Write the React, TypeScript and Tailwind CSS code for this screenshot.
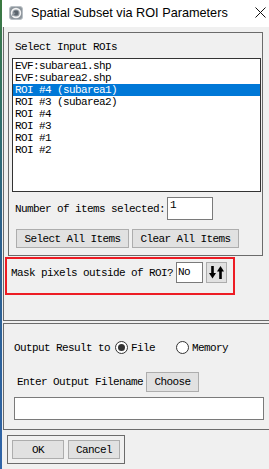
import type { ReactNode } from "react";

const mono =
  "font-['Liberation_Mono',monospace] text-[11px] leading-[12px] tracking-[-0.6px] text-black";

const items = [
  "EVF:subarea1.shp",
  "EVF:subarea2.shp",
  "ROI #4 (subarea1)",
  "ROI #3 (subarea2)",
  "ROI #4",
  "ROI #3",
  "ROI #1",
  "ROI #2",
];

function Btn({ children, className }: { children: ReactNode; className: string }) {
  return (
    <div
      className={`flex shrink-0 items-center justify-center border border-[#adadad] bg-[#e1e1e1] ${mono} ${className}`}
    >
      {children}
    </div>
  );
}

function Radio({ checked }: { checked: boolean }) {
  return (
    <svg width="13" height="13" viewBox="0 0 13 13" className="shrink-0">
      <circle cx="6.5" cy="6.5" r="6" fill="#fff" stroke="#333" strokeWidth="1" />
      {checked && <circle cx="6.5" cy="6.5" r="3.5" fill="#333" />}
    </svg>
  );
}

function TitleIcon() {
  return (
    <svg width="14" height="14" viewBox="0 0 14 14" className="shrink-0">
      <rect x="0.5" y="0.5" width="13" height="13" rx="2.5" fill="#8e969d" stroke="#b9bfc4" />
      <circle cx="7" cy="7" r="4.4" fill="none" stroke="#f4f4f4" strokeWidth="1.6" />
      <circle cx="7" cy="7" r="2.4" fill="#5b646c" />
      <path d="M3 9.5 L6 6.8" stroke="#8e969d" strokeWidth="1.4" />
    </svg>
  );
}

function SwapIcon() {
  return (
    <svg width="15" height="13" viewBox="0 0 15 13">
      <rect x="2.2" y="0" width="2.6" height="8" fill="#000" />
      <polygon points="0,7 7,7 3.5,12.5" fill="#000" />
      <rect x="10.2" y="4.5" width="2.6" height="8.5" fill="#000" />
      <polygon points="8,5.5 15,5.5 11.5,0" fill="#000" />
    </svg>
  );
}

export default function App() {
  return (
    <div className="flex h-[469px] w-[269px] overflow-hidden bg-[#f0f0f0]">
      <div className="w-[2px] shrink-0 bg-gradient-to-b from-[#3c7a3f] via-[#2b5f8c] to-[#2f64a8]" />

      <div className="flex min-w-0 flex-1 flex-col">
        {/* title bar */}
        <div className="flex h-[27px] shrink-0 bg-white">
          <div className="flex h-[25px] flex-1 items-center">
            <div className="ml-[7px]">
              <TitleIcon />
            </div>
            <span className="ml-[8px] whitespace-nowrap font-['Liberation_Sans',Arial,sans-serif] text-[12.7px] leading-[16px] text-black">
              Spatial Subset via ROI Parameters
            </span>
            <svg width="11" height="11" viewBox="0 0 11 11" className="ml-auto mr-[3px]">
              <path d="M0.5 0.5 L10.5 10.5 M10.5 0.5 L0.5 10.5" stroke="#111" strokeWidth="1" />
            </svg>
          </div>
        </div>

        <div className="flex flex-1 flex-col pl-[1px]">
          {/* outer frame */}
          <div className="relative flex h-[294px] shrink-0 flex-col border-b border-l border-[#6b6b6b]">
            <div className="ml-[4px] mt-[5px] flex h-[224px] w-[255px] flex-col border border-[#6b6b6b] pl-[3px]">
              <div className={`ml-[3px] mt-[8px] whitespace-nowrap ${mono}`}>Select Input ROIs</div>

              <div className="mt-[5px] flex h-[134px] w-[249px] flex-col border border-[#333] bg-white pt-[1px]">
                {items.map((item, i) => (
                  <div
                    key={item}
                    className={`h-[12px] whitespace-pre pl-[2px] pt-[1px] font-['Liberation_Mono',monospace] text-[11px] leading-[11px] tracking-[-0.6px] ${
                      i === 2 ? "bg-[#0078d7] text-white" : "text-black"
                    }`}
                  >
                    {item}
                  </div>
                ))}
              </div>

              <div className="mt-[5px] flex items-center">
                <span className={`ml-[3px] whitespace-nowrap ${mono}`}>Number of items selected:</span>
                <div className={`ml-[2px] h-[23px] w-[46px] border border-[#7a7a7a] bg-white pl-[2px] pt-[1px] ${mono}`}>
                  1
                </div>
              </div>

              <div className="ml-[4px] mt-[9px] flex gap-[3px]">
                <Btn className="h-[19px] w-[113px]">Select All Items</Btn>
                <Btn className="h-[19px] w-[107px]">Clear All Items</Btn>
              </div>
            </div>

            <div className="mt-[6px] flex items-center pl-[7px]">
              <span className={`whitespace-nowrap ${mono}`}>Mask pixels outside of ROI?</span>
              <div className={`ml-[3px] h-[21px] w-[27px] border border-[#7a7a7a] bg-white pl-[1px] pt-[3px] ${mono}`}>
                No
              </div>
              <div className="ml-[3px] flex h-[21px] w-[21px] items-center justify-center border border-[#adadad] bg-[#e1e1e1]">
                <SwapIcon />
              </div>
            </div>

            {/* annotation */}
            <div className="pointer-events-none absolute left-[1px] top-[230px] h-[38px] w-[230px] border-2 border-[#ed1c24]" />
          </div>

          {/* output frame */}
          <div className="mt-[2px] flex h-[107px] shrink-0 flex-col border-b border-l border-t border-[#6b6b6b]">
            <div className="mt-[17px] flex h-[13px] items-center pl-[10px]">
              <span className={`whitespace-nowrap ${mono}`}>Output Result to</span>
              <div className="ml-[5px]">
                <Radio checked />
              </div>
              <span className={`ml-[3px] ${mono}`}>File</span>
              <div className="ml-[21px]">
                <Radio checked={false} />
              </div>
              <span className={`ml-[3px] ${mono}`}>Memory</span>
            </div>

            <div className="mt-[18px] flex items-center pl-[13px]">
              <span className={`whitespace-nowrap ${mono}`}>Enter Output Filename</span>
              <Btn className="ml-[3px] h-[20px] w-[53px]">Choose</Btn>
            </div>

            <div className="ml-[10px] mt-[5px] h-[23px] w-[250px] border border-[#7a7a7a] bg-white" />
          </div>

          {/* buttons frame */}
          <div className="ml-[4px] mt-[5px] flex h-[29px] w-[118px] shrink-0 gap-[4px] border border-[#6b6b6b] pl-[4px] pt-[4px]">
            <Btn className="h-[19px] w-[52px]">OK</Btn>
            <Btn className="h-[19px] w-[52px]">Cancel</Btn>
          </div>
        </div>
      </div>
    </div>
  );
}
